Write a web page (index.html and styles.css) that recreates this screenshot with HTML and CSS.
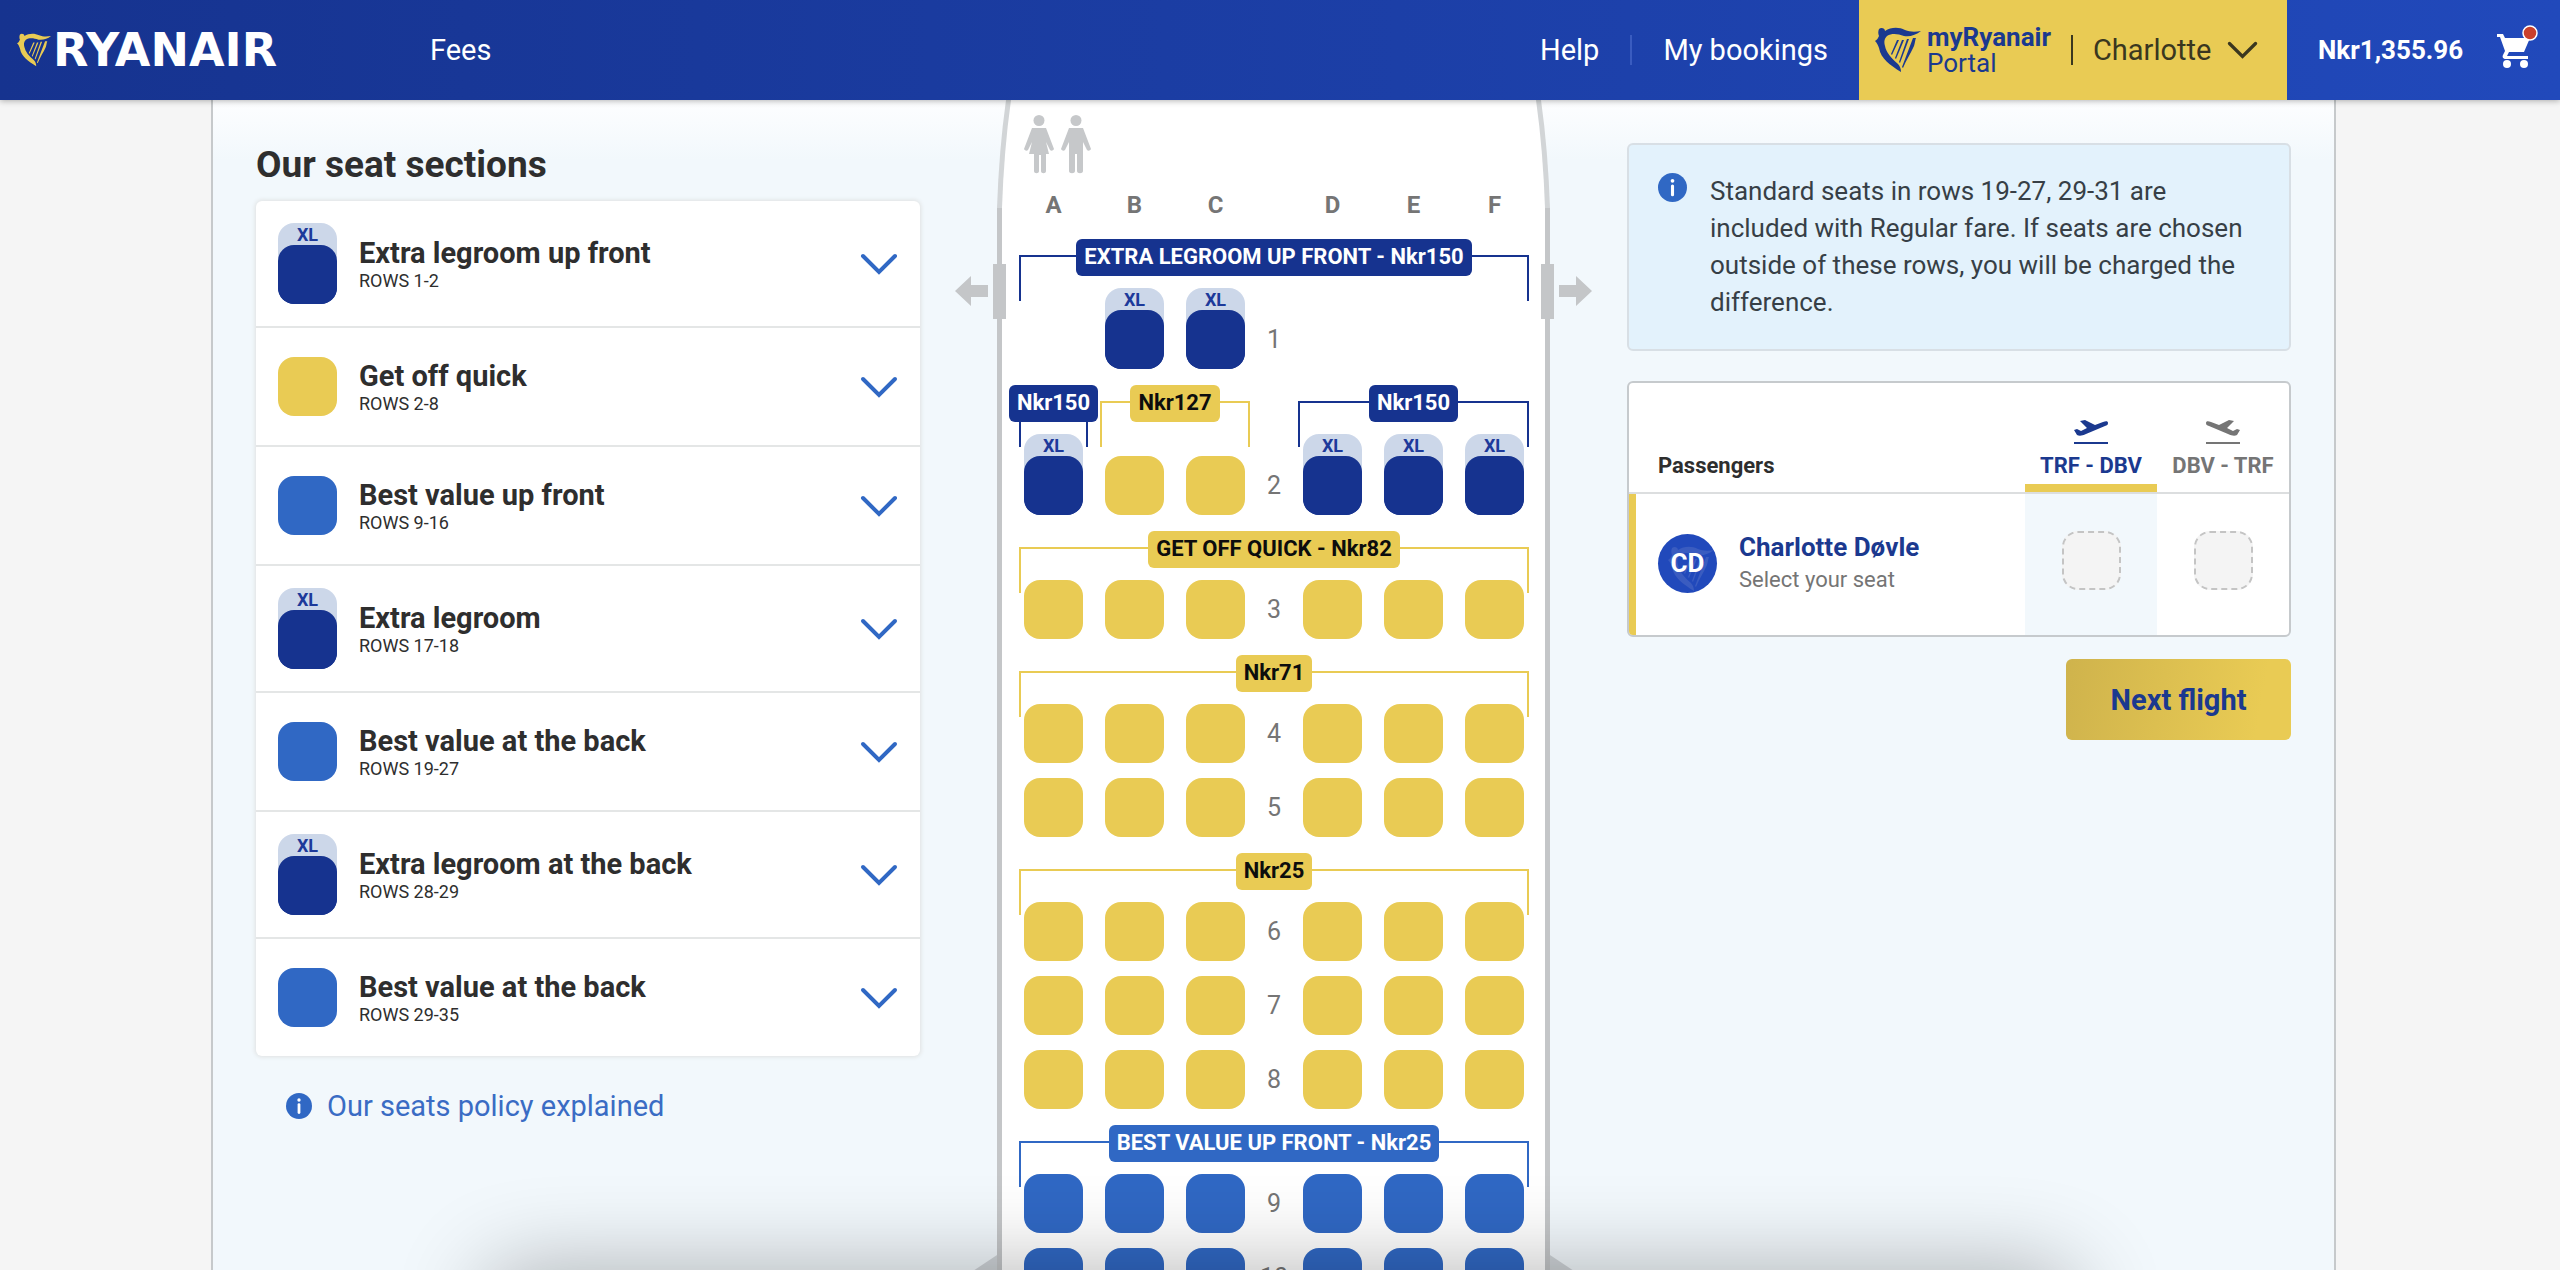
FILE: index.html
```html
<!DOCTYPE html>
<html lang="en">
<head>
    <meta charset="UTF-8">
    <meta name="viewport" content="width=device-width, initial-scale=1.0">
    <title>Ryanair - Choose your seats</title>
    <link rel="stylesheet" href="styles.css">
</head>
<body>
    <svg class="defs" aria-hidden="true">
        <symbol id="harp" viewBox="0 0 46 46">
            <path d="M4 2c2-2 6-1 6 2 6-4 14-4 20-1 5 2 10 2 16 1-5 4-11 6-17 5-6-2-12-3-17 0-3 3-3 6-2 10 1 6 6 12 13 18 2 2 3 5 3 8C15 38 6 32 4 21c-1-3-2-5-4-7 2-1 3-3 4-5C3 7 3 4 4 2z"/>
            <path d="M22 13l-6 14 1 1 7-15zM27 13l-7 18 1 1 8-19zM32 12l-8 23 1 1 9-24zM38 11l-11 29 1 1c3-8 8-15 11-22 1-3 1-6 2-8z" />
        </symbol>
        <symbol id="chevron" viewBox="0 0 38 22">
            <path d="M3 3l16 16L35 3" fill="none" stroke="currentColor" stroke-width="4" stroke-linecap="round"/>
        </symbol>
        <symbol id="info" viewBox="0 0 28 28">
            <circle cx="14" cy="14" r="14" fill="#3068c4"/>
            <circle cx="14" cy="7.5" r="1.8" fill="#fff"/>
            <path d="M14 12.5v8.5" stroke="#fff" stroke-width="3" stroke-linecap="round"/>
        </symbol>
        <symbol id="plane" viewBox="0 0 34 24">
            <path d="M6 1l5-1 10 5 8-3c3-1 5-1 5 1s-1 2-3 3L12 14c-4 2-7 2-9 1L0 10l3-1 4 2 6-3z"/>
            <path d="M0 22h34v2H0z"/>
        </symbol>
    </svg>

    <header class="topbar">
        <a class="logo" href="#">
            <svg class="logo-harp"><use href="#harp"/></svg>
            <span>RYANAIR</span>
        </a>
        <nav class="nav-left"><a href="#">Fees</a></nav>
        <nav class="nav-right">
            <a href="#">Help</a>
            <a href="#">My bookings</a>
        </nav>
        <button class="account">
            <svg class="account-harp"><use href="#harp"/></svg>
            <span class="portal"><strong>myRyanair</strong><span>Portal</span></span>
            <span class="user">Charlotte</span>
            <svg class="account-chevron"><use href="#chevron"/></svg>
        </button>
        <button class="basket">
            <span>Nkr1,355.96</span>
            <svg class="cart" viewBox="0 0 41 44">
                <path d="M0 9h6l2 4h25l-6 14H12l-2 4h21v3H9c-3 0-4-2-3-4l2-4L3 12H0z" fill="#fff"/>
                <circle cx="10" cy="39" r="4" fill="#fff"/>
                <circle cx="27" cy="39" r="4" fill="#fff"/>
                <circle cx="33" cy="8" r="7" fill="#c9402c" stroke="#fff" stroke-width="1.5"/>
            </svg>
        </button>
    </header>

    <main class="content">
        <section class="sections">
            <h2>Our seat sections</h2>
            <ul class="section-list">
                <li><button><span class="seat dark xl"><b>XL</b></span><span class="name"><strong>Extra legroom up front</strong><small>ROWS 1-2</small></span><svg class="chevron"><use href="#chevron"/></svg></button></li>
                <li><button><span class="seat gold"></span><span class="name"><strong>Get off quick</strong><small>ROWS 2-8</small></span><svg class="chevron"><use href="#chevron"/></svg></button></li>
                <li><button><span class="seat blue"></span><span class="name"><strong>Best value up front</strong><small>ROWS 9-16</small></span><svg class="chevron"><use href="#chevron"/></svg></button></li>
                <li><button><span class="seat dark xl"><b>XL</b></span><span class="name"><strong>Extra legroom</strong><small>ROWS 17-18</small></span><svg class="chevron"><use href="#chevron"/></svg></button></li>
                <li><button><span class="seat blue"></span><span class="name"><strong>Best value at the back</strong><small>ROWS 19-27</small></span><svg class="chevron"><use href="#chevron"/></svg></button></li>
                <li><button><span class="seat dark xl"><b>XL</b></span><span class="name"><strong>Extra legroom at the back</strong><small>ROWS 28-29</small></span><svg class="chevron"><use href="#chevron"/></svg></button></li>
                <li><button><span class="seat blue"></span><span class="name"><strong>Best value at the back</strong><small>ROWS 29-35</small></span><svg class="chevron"><use href="#chevron"/></svg></button></li>
            </ul>
            <a class="policy" href="#"><svg><use href="#info"/></svg>Our seats policy explained</a>
        </section>

        <section class="plane">
            <svg class="nose" viewBox="0 0 554 108" preserveAspectRatio="none">
                <path d="M9 0Q2 50 0 108H554Q552 50 545 0z" fill="#d2d5d7"/>
                <path d="M14 0Q7 50 5 108H549Q547 50 540 0z" fill="#fff"/>
            </svg>
            <svg class="exit exit-left" viewBox="0 0 51 55">
                <path d="M38 0h13v55H38zM0 27l16-15v9h17v12H16v9z" fill="#c4c6c8"/>
            </svg>
            <svg class="exit exit-right" viewBox="0 0 51 55">
                <path d="M0 0h13v55H0zM51 27l-16-15v9H18v12h17v9z" fill="#c4c6c8"/>
            </svg>
            <svg class="wing wing-left" viewBox="0 0 24 16"><path d="M24 0v16H0z"/></svg>
            <svg class="wing wing-right" viewBox="0 0 24 16"><path d="M0 0v16h24z"/></svg>
            <svg class="toilets" viewBox="0 0 67 59">
                <g fill="#c6c8ca">
                    <circle cx="15" cy="5.5" r="5.5"/>
                    <path d="M8 13h14l8 21c-1 2-3 2-4 1l-4-8 3 12h-3v17c0 3-5 3-5 0V40h-2v16c0 3-5 3-5 0V39H5l3-12-4 8c-1 1-3 1-4-1z"/>
                    <circle cx="52" cy="5.5" r="5.5"/>
                    <path d="M45 13h14l8 21c-1 2-3 2-4 1l-4-8v29c0 3-6 3-6 0V39h-2v17c0 3-6 3-6 0V27l-4 8c-1 1-3 1-4-1z"/>
                </g>
            </svg>
            <div class="row letters">
                <span>A</span><span>B</span><span>C</span><span></span><span>D</span><span>E</span><span>F</span>
            </div>
            <div id="seatmap" class="seatmap"></div>
        </section>

        <aside class="summary">
            <div class="notice">
                <svg><use href="#info"/></svg>
                <p>Standard seats in rows 19-27, 29-31 are included with Regular fare. If seats are chosen outside of these rows, you will be charged the difference.</p>
            </div>
            <table class="passengers">
                <thead>
                    <tr>
                        <th class="who">Passengers</th>
                        <th class="leg active"><svg><use href="#plane"/></svg>TRF - DBV</th>
                        <th class="leg"><svg class="back"><use href="#plane"/></svg>DBV - TRF</th>
                    </tr>
                </thead>
                <tbody>
                    <tr>
                        <td class="who">
                            <div class="passenger">
                                <span class="avatar"><svg><use href="#harp"/></svg><b>CD</b></span>
                                <span class="details"><strong>Charlotte Døvle</strong><span>Select your seat</span></span>
                            </div>
                        </td>
                        <td class="slot active"><span class="empty"></span></td>
                        <td class="slot"><span class="empty"></span></td>
                    </tr>
                </tbody>
            </table>
            <button class="next">Next flight</button>
        </aside>
    </main>
    <div class="dock-shadow"></div>
    <script src="script.js"></script>
</body>
</html>
```
FILE: styles.css
```css
* { box-sizing: border-box; }
body { margin: 0; padding-right: 13px; height: 100vh; overflow: hidden; display: flex; flex-direction: column; font-family: Roboto, "Liberation Sans", sans-serif; color: #2e2e2e; background-color: #f5f5f5; }
button { font-family: inherit; color: inherit; border: 0; padding: 0; background: none; cursor: pointer; }
a { text-decoration: none; color: inherit; }
.defs { position: absolute; width: 0; height: 0; }

/* header */
.topbar { flex: none; height: 100px; margin-right: -13px; display: flex; align-items: center; position: relative; z-index: 5; color: #fff; font-size: 29px; background: linear-gradient(90deg, #16338f, #2149bb); box-shadow: 0 1px 6px rgba(0, 0, 0, 0.3); }
.logo { width: 430px; display: flex; align-items: center; gap: 2px; padding-left: 17px; font-family: "DejaVu Sans", sans-serif; font-size: 46px; font-weight: bold; }
.logo-harp { width: 34px; height: 34px; fill: #e9cb54; }
.nav-left { flex: 1; }
.nav-right { display: flex; }
.nav-right a { padding: 0 31px; line-height: 30px; }
.nav-right a + a { border-left: 2px solid #3a5cc0; }
.account { height: 100px; width: 428px; padding: 0 29px 0 16px; display: flex; align-items: center; background-color: #e9cb54; color: #3a371f; font-size: 29px; }
.account-harp { width: 46px; height: 46px; fill: #1b398f; }
.portal { display: flex; flex-direction: column; margin-left: 6px; font-size: 26px; line-height: 26px; text-align: left; color: #1b398f; }
.user { margin-left: 20px; padding-left: 20px; border-left: 2px solid #3a371f; line-height: 30px; }
.account-chevron { width: 31px; height: 18px; margin-left: auto; }
.basket { width: 273px; padding: 0 22px 0 31px; display: flex; align-items: center; justify-content: space-between; color: #fff; font-size: 26px; font-weight: 700; }
.cart { width: 41px; height: 44px; margin-top: -6px; }

/* page body */
.content { flex: 1; width: 100%; max-width: 2125px; margin: 0 auto; padding: 0 43px; display: grid; grid-template-columns: 1fr 553px 1fr; gap: 77px; align-items: start; border: solid #c6c9cb; border-width: 0 2px; background: linear-gradient(#fdfeff, #f2f8fc 60px); }

.sections h2 { margin: 45px 0 16px; font-size: 37px; line-height: 40px; font-weight: 700; }
.section-list { list-style: none; margin: 0; padding: 0; background-color: #fff; border-radius: 6px; box-shadow: 0 0 4px 1px #dfe1e1; }
.section-list li + li { border-top: 2px solid #e4e6e6; }
.section-list button { width: 100%; padding: 29px 22px; display: flex; align-items: center; text-align: left; gap: 22px; }
.section-list button:has(.xl) { padding: 22px; }
.name { flex: 1; display: flex; flex-direction: column; }
.name strong { font-size: 29px; line-height: 34px; font-weight: 700; }
.name small { font-size: 18px; line-height: 22px; }
.chevron { width: 38px; height: 22px; color: #3068c4; }
.policy { display: flex; align-items: center; gap: 15px; margin: 34px 0 0 30px; font-size: 29px; line-height: 32px; color: #3a6cc4; }
.policy svg { width: 26px; height: 26px; }

/* seats */
.seat { flex: none; display: block; width: 59px; height: 59px; border-radius: 16px; }
.seat.gold { background-color: #e9cb54; }
.seat.blue { background-color: #3068c4; }
.seat.dark { background-color: #16338f; }
.seat.xl { height: 81px; padding-bottom: 59px; background: linear-gradient(#ccd7e9 45px, #16338f 45px); position: relative; overflow: hidden; text-align: center; font-size: 18px; line-height: 24px; color: #1d3a9a; }
.seat.xl b { font-weight: 700; }
.seat.xl::after { content: ""; position: absolute; left: 0; right: 0; bottom: 0; height: 59px; border-radius: 16px; background-color: #16338f; }

.plane { position: relative; padding: 15px 26px 0 27px; }
.plane::before { content: ""; position: absolute; top: 108px; bottom: 0; left: 0; right: 0; background-color: #fff; border: solid #c4c6c8; border-width: 0 5px; }
.nose { position: absolute; top: 0; left: 0; width: 100%; height: 108px; }
.exit { position: absolute; top: 164px; width: 51px; height: 55px; }
.exit-left { left: -42px; }
.exit-right { right: -42px; }
.wing { position: absolute; top: 1155px; width: 24px; height: 16px; fill: #cfd4d8; }
.wing-left { left: -24px; }
.wing-right { right: -24px; }
.toilets { display: block; position: relative; width: 67px; height: 59px; }
.row, .band { position: relative; display: grid; grid-template-columns: 59px 59px 59px 14px 59px 59px 59px; column-gap: 22px; align-items: end; }
.letters { margin: 17px 0 19px; font-size: 24px; line-height: 29px; font-weight: 700; color: #757575; text-align: center; }
.seatmap { display: flex; flex-direction: column; gap: 16px; }
.cabin { display: flex; flex-direction: column; gap: 15px; }
.row .number { height: 59px; display: flex; justify-content: center; align-items: center; font-size: 25px; color: #757575; }
.band { height: 49px; margin-bottom: -15px; align-items: start; }
.bracket { height: 46px; margin: 16px -5px 0; display: flex; justify-content: center; border: 2px solid; border-bottom: 0; }
.tag { flex: none; height: 37px; margin-top: -18px; padding: 0 8px; border-radius: 6px; font-size: 22px; line-height: 35px; font-weight: 700; white-space: nowrap; }
.bracket.dark { border-color: #16338f; }
.bracket.gold { border-color: #e9cb54; }
.bracket.blue { border-color: #3068c4; }
.dark .tag { background-color: #16338f; color: #fff; }
.gold .tag { background-color: #e9cb54; color: #0d0d0d; }
.blue .tag { background-color: #3068c4; color: #fff; }

/* right column */
.summary { display: flex; flex-direction: column; padding-top: 43px; }
.notice { display: flex; gap: 23px; padding: 28px 29px; border: 2px solid #d8dfe5; border-radius: 6px; background-color: #e3f2fc; }
.notice svg { flex: none; width: 29px; height: 29px; }
.notice p { margin: 0; font-size: 26px; line-height: 37px; color: #373f46; }
.passengers { margin-top: 30px; width: 100%; border-collapse: separate; border-spacing: 0; border: 2px solid #c6cacd; border-radius: 6px; background-color: #fff; overflow: hidden; }
.passengers th { height: 111px; padding: 0 0 14px; vertical-align: bottom; border-bottom: 2px solid #dcdedf; font-size: 22px; line-height: 24px; font-weight: 700; text-align: left; }
.passengers th.who { padding-left: 29px; }
.passengers .leg { width: 132px; text-align: center; color: #757575; fill: #757575; }
.passengers .leg.active { color: #1b398f; fill: #1b398f; box-shadow: inset 0 -8px #e9cb54; }
.leg svg { display: block; width: 34px; height: 24px; margin: 0 auto 10px; }
.leg svg.back { transform: scaleX(-1); }
.passengers td { height: 141px; padding: 0; }
.passengers td.who { border-left: 7px solid #e9cb54; }
.passenger { display: flex; align-items: center; gap: 22px; padding: 0 0 3px 22px; }
.avatar { position: relative; width: 59px; height: 59px; display: flex; align-items: center; justify-content: center; border-radius: 50%; background-color: #2149bb; color: #fff; font-size: 26px; }
.avatar svg { position: absolute; left: 10px; top: 12px; width: 46px; height: 46px; fill: #3a5cc0; }
.avatar b { position: relative; font-weight: 700; }
.details { display: flex; flex-direction: column; font-size: 22px; line-height: 32px; color: #757575; }
.details strong { font-size: 26px; line-height: 34px; font-weight: 700; color: #1b398f; }
.slot.active { background-color: #f2f8fc; }
.empty { display: block; width: 59px; height: 59px; margin: 0 auto 8px; border: 2px dashed #c4c4c4; border-radius: 16px; background-color: #f4f4f4; }
.next { align-self: flex-end; margin-top: 22px; width: 225px; height: 81px; border-radius: 6px; font-size: 29px; font-weight: 700; color: #1b398f; background: linear-gradient(100deg, #cfb34c, #e9cb54 85%); }

.dock-shadow { position: fixed; left: 19%; right: 19%; top: 100%; height: 100px; border-radius: 30px; box-shadow: 0 0 90px rgba(0, 0, 0, 0.3); z-index: 4; }
```
FILE: script.js
```js
// colour of each seat, A-F: d = extra legroom, g = get off quick, b = best value, - = no seat
const colours = { d: 'dark xl', g: 'gold', b: 'blue' };
const cabins = [
    { tags: [['dark', 'EXTRA LEGROOM UP FRONT - Nkr150', '1 / -1']], rows: { 1: '-dd---' } },
    { tags: [['dark', 'Nkr150', '1'], ['gold', 'Nkr127', '2 / 4'], ['dark', 'Nkr150', '5 / -1']], rows: { 2: 'dggddd' } },
    { tags: [['gold', 'GET OFF QUICK - Nkr82', '1 / -1']], rows: { 3: 'gggggg' } },
    { tags: [['gold', 'Nkr71', '1 / -1']], rows: { 4: 'gggggg', 5: 'gggggg' } },
    { tags: [['gold', 'Nkr25', '1 / -1']], rows: { 6: 'gggggg', 7: 'gggggg', 8: 'gggggg' } },
    { tags: [['blue', 'BEST VALUE UP FRONT - Nkr25', '1 / -1']], rows: { 9: 'bbbbbb', 10: 'bbbbbb' } }
];

function seat(code, name) {
    if (code === '-') return '<span></span>';
    const label = code === 'd' ? '<b>XL</b>' : '';
    return `<button class="seat ${colours[code]}" aria-label="Seat ${name}">${label}</button>`;
}

function row(number, codes) {
    const seats = [...codes].map((code, i) => seat(code, number + 'ABCDEF'[i]));
    seats.splice(3, 0, `<span class="number">${number}</span>`);
    return `<div class="row">${seats.join('')}</div>`;
}

document.getElementById('seatmap').innerHTML = cabins.map(cabin => {
    const tags = cabin.tags.map(([colour, text, column]) =>
        `<div class="bracket ${colour}" style="grid-column: ${column}"><span class="tag">${text}</span></div>`);
    const rows = Object.entries(cabin.rows).map(([number, codes]) => row(number, codes));
    return `<div class="cabin"><div class="band">${tags.join('')}</div>${rows.join('')}</div>`;
}).join('');
```
